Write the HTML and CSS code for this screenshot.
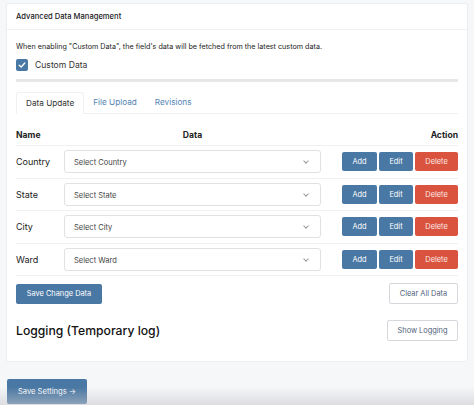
FILE: index.html
```html
<!DOCTYPE html>
<html lang="en">
<head>
    <meta charset="UTF-8">
    <meta name="viewport" content="width=device-width, initial-scale=1.0">
    <title>Advanced Data Management</title>
    <link rel="stylesheet" href="styles.css">
</head>
<body>
    <div class="card">
        <div class="card-header">Advanced Data Management</div>

        <div class="card-body">
            <p class="hint">When enabling "Custom Data", the field's data will be fetched from the latest custom data.</p>

            <label class="check-row">
                <span class="checkbox">
                    <svg width="8" height="8" viewBox="0 0 10 10"><path d="M1.5 5.2 L4 7.5 L8.5 2.5" fill="none" stroke="#fff" stroke-width="1.6" stroke-linecap="round" stroke-linejoin="round"/></svg>
                </span>
                Custom Data
            </label>

            <div class="divider"></div>

            <!-- Tabs -->
            <div class="tabs">
                <div class="tab active">Data Update</div>
                <div class="tab">File Upload</div>
                <div class="tab">Revisions</div>
            </div>

            <!-- Data table -->
            <div class="table">
                <div class="row head">
                    <div>Name</div>
                    <div class="center">Data</div>
                    <div class="right">Action</div>
                </div>

                <div class="row">
                    <div>Country</div>
                    <div class="select">Select Country<span class="caret"></span></div>
                    <div class="actions">
                        <button class="btn btn-blue btn-add">Add</button>
                        <button class="btn btn-blue btn-edit">Edit</button>
                        <button class="btn btn-red btn-del">Delete</button>
                    </div>
                </div>

                <div class="row">
                    <div>State</div>
                    <div class="select">Select State<span class="caret"></span></div>
                    <div class="actions">
                        <button class="btn btn-blue btn-add">Add</button>
                        <button class="btn btn-blue btn-edit">Edit</button>
                        <button class="btn btn-red btn-del">Delete</button>
                    </div>
                </div>

                <div class="row">
                    <div>City</div>
                    <div class="select">Select City<span class="caret"></span></div>
                    <div class="actions">
                        <button class="btn btn-blue btn-add">Add</button>
                        <button class="btn btn-blue btn-edit">Edit</button>
                        <button class="btn btn-red btn-del">Delete</button>
                    </div>
                </div>

                <div class="row">
                    <div>Ward</div>
                    <div class="select">Select Ward<span class="caret"></span></div>
                    <div class="actions">
                        <button class="btn btn-blue btn-add">Add</button>
                        <button class="btn btn-blue btn-edit">Edit</button>
                        <button class="btn btn-red btn-del">Delete</button>
                    </div>
                </div>
            </div>

            <div class="bar">
                <button class="btn btn-blue btn-save">Save Change Data</button>
                <button class="btn btn-outline btn-clear">Clear All Data</button>
            </div>

            <div class="bar logging">
                <h2>Logging (Temporary log)</h2>
                <button class="btn btn-outline btn-log">Show Logging</button>
            </div>
        </div>
    </div>

    <button class="btn btn-blue btn-settings">Save Settings &rarr;</button>

    <div class="fade"></div>
</body>
</html>
```

FILE: styles.css
```css
/* Global Styles */
:root {
    --blue: #4a78a4;
    --red: #d9533f;
    --link: #5384b3;
    --line: #eef0f2;
    --text: #222;
}

body {
    font-family: Inter, "Noto Sans", Arial, sans-serif;
    margin: 0;
    padding: 0;
    background-color: #f6f7f9;
    color: var(--text);
}

.card {
    margin: 3px 6px 0;
    background-color: #ffffff;
    border: 1px solid #eceef1;
    border-radius: 3px;
    box-sizing: border-box;
    height: 359px;
}

.card-header {
    height: 25px;
    line-height: 25px;
    padding: 0 9px;
    font-size: 7.6px;
    font-weight: 500;
    border-bottom: 1px solid var(--line);
}

.card-body {
    padding: 0 9px;
}

.hint {
    margin: 11px 0 0;
    font-size: 7.2px;
    line-height: 11px;
}

.check-row {
    display: flex;
    align-items: center;
    gap: 7px;
    margin-top: 7px;
    font-size: 8.6px;
    color: #333;
}

.checkbox {
    width: 12px;
    height: 12px;
    border-radius: 2px;
    background-color: var(--blue);
    display: flex;
    align-items: center;
    justify-content: center;
}

.divider {
    height: 3px;
    background-color: #e6e7e9;
    margin-top: 8px;
}

/* Tabs */
.tabs {
    display: flex;
    margin-top: 10px;
    border-bottom: 1px solid var(--line);
    height: 22px;
    box-sizing: border-box;
}

.tab {
    padding: 0 9px;
    font-size: 8.2px;
    line-height: 21px;
    color: var(--link);
}

.tab.active {
    color: #333;
    border: 1px solid var(--line);
    border-bottom-color: #fff;
    border-radius: 3px 3px 0 0;
    line-height: 20px;
    height: 22px;
    box-sizing: border-box;
}

/* Table */
.table {
    margin-top: 10px;
}

.row {
    display: grid;
    grid-template-columns: 48px 257px 1fr;
    align-items: center;
    height: 32.5px;
    border-bottom: 1px solid var(--line);
    font-size: 9px;
    box-sizing: border-box;
}

.row.head {
    height: 22px;
    font-weight: 700;
    font-size: 8.6px;
}

.center {
    text-align: center;
}

.right {
    text-align: right;
}

.select {
    position: relative;
    height: 23px;
    line-height: 23px;
    border: 1px solid #dfe1e4;
    border-radius: 3px;
    padding-left: 9px;
    font-size: 7.5px;
    color: #444;
    box-sizing: border-box;
}

.caret {
    position: absolute;
    right: 12px;
    top: 8px;
    width: 3px;
    height: 3px;
    border-right: 1px solid #999;
    border-bottom: 1px solid #999;
    transform: rotate(45deg);
}

.actions {
    display: flex;
    justify-content: flex-end;
    gap: 2px;
}

.btn {
    font-family: inherit;
    font-size: 7.4px;
    border: none;
    border-radius: 2px;
    padding: 0;
    cursor: pointer;
}

.btn-blue {
    background-color: var(--blue);
    color: #ffffff;
}

.btn-red {
    background-color: var(--red);
    color: #fde9e5;
}

.btn-outline {
    background-color: #ffffff;
    color: #50627a;
    border: 1px solid #d5d9de;
}

.btn-add, .btn-edit, .btn-del {
    height: 19px;
}

.btn-add {
    width: 35px;
}

.btn-edit {
    width: 34px;
}

.btn-del {
    width: 43px;
}

/* Bottom bars */
.bar {
    display: flex;
    justify-content: space-between;
    align-items: center;
    margin-top: 7px;
}

.btn-save {
    width: 86px;
    height: 20px;
}

.btn-clear {
    width: 69px;
    height: 21px;
}

.logging {
    margin-top: 16px;
}

.logging h2 {
    margin: 0;
    font-size: 12.2px;
    font-weight: 500;
    color: #111;
}

.btn-log {
    width: 71px;
    height: 21px;
}

.btn-settings {
    display: block;
    margin: 17px 0 0 7px;
    width: 80px;
    height: 25px;
    font-size: 7.6px;
}

.fade {
    position: fixed;
    left: 0;
    right: 0;
    bottom: 0;
    height: 18px;
    background: linear-gradient(rgba(200, 200, 205, 0), rgba(200, 200, 205, 0.55));
    pointer-events: none;
}
```
